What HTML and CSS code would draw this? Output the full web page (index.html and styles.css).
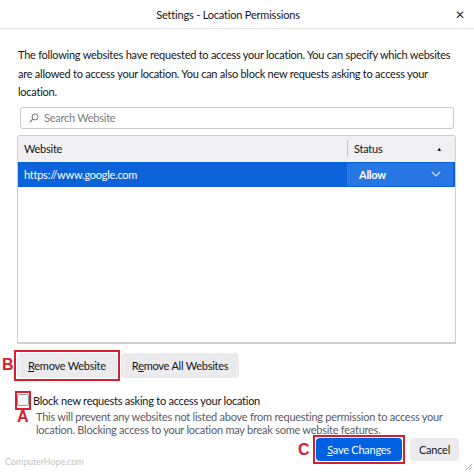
FILE: index.html
```html
<!DOCTYPE html>
<html lang="en">
<head>
    <meta charset="UTF-8" />
    <title>Settings - Location Permissions</title>
    <link rel="stylesheet" href="styles.css">
</head>
<body>
    <div class="dialog">
        <div class="dialog-header">
            <h1>Settings - Location Permissions</h1>
            <span class="close">&#x2715;</span>
        </div>

        <div class="dialog-body">
            <p class="intro">The following websites have requested to access your location. You can specify which websites are allowed to access your location. You can also block new requests asking to access your location.</p>

            <div class="search">
                <svg width="10" height="10" viewBox="0 0 10 10">
                    <circle cx="6" cy="4" r="3" fill="none" stroke="#777" stroke-width="1"/>
                    <path d="M3.8 6.2 L1 9" stroke="#777" stroke-width="1.2"/>
                </svg>
                <span>Search Website</span>
            </div>

            <div class="sites">
                <div class="sites-head">
                    <div class="col-site">Website</div>
                    <div class="col-status">Status <span class="sort">&#9650;</span></div>
                </div>
                <div class="sites-row selected">
                    <div class="col-site">https://www.google.com</div>
                    <div class="col-status status-cell">
                        <b>Allow</b>
                        <svg width="10" height="6" viewBox="0 0 10 6">
                            <path d="M1 1 L5 5 L9 1" fill="none" stroke="#cfe0ff" stroke-width="1.2"/>
                        </svg>
                    </div>
                </div>
            </div>

            <div class="actions">
                <div class="mark mark-b">
                    <span class="letter">B</span>
                    <button class="btn"><u>R</u>emove Website</button>
                </div>
                <button class="btn">R<u>e</u>move All Websites</button>
            </div>

            <div class="block-option">
                <div class="mark mark-a">
                    <span class="box"></span>
                    <span class="letter">A</span>
                </div>
                <span>Block new requests asking to access your location</span>
            </div>
            <p class="note">This will prevent any websites not listed above from requesting permission to access your location. Blocking access to your location may break some website features.</p>

            <div class="footer">
                <div class="mark mark-c">
                    <span class="letter">C</span>
                    <button class="btn primary"><u>S</u>ave Changes</button>
                </div>
                <button class="btn cancel">Cancel</button>
            </div>
        </div>

        <div class="watermark">ComputerHope.com</div>
        <svg class="grip" width="8" height="8" viewBox="0 0 8 8">
            <path d="M7 1 L1 7 M7 4 L4 7 M7 6.5 L6.5 7" stroke="#aaa" stroke-width="1"/>
        </svg>
    </div>
</body>
</html>
```

FILE: styles.css
```css
* {
    box-sizing: border-box;
    margin: 0;
    padding: 0;
}

body {
    font-family: Lato, sans-serif;
    font-size: 11px;
    letter-spacing: -0.25px;
    color: #15141a;
    background: #fff;
}

.dialog {
    position: relative;
    width: 474px;
    height: 472px;
}

.dialog-header {
    position: relative;
    height: 29px;
    border-bottom: 1px solid #e4e4e7;
    display: flex;
    align-items: center;
    justify-content: center;
    padding-right: 18px;
}

.dialog-header h1 {
    font-size: 11px;
    font-weight: 400;
    letter-spacing: -0.2px;
}

.close {
    position: absolute;
    right: 9px;
    top: 7px;
    font-size: 12px;
    color: #333;
}

.dialog-body {
    padding: 17px 18px 0 17px;
}

.intro {
    line-height: 18.5px;
    padding-left: 1px;
}

.search {
    margin: 5px 2px 0 3px;
    height: 22px;
    border: 1px solid #c9c9cc;
    border-radius: 3px;
    display: flex;
    align-items: center;
    gap: 5px;
    padding-left: 8px;
    color: #7a7a80;
}

.sites {
    margin-top: 6px;
    height: 209px;
    border: 1px solid #cfcfd3;
    border-bottom-width: 2px;
    border-radius: 3px 3px 0 0;
}

.sites-head,
.sites-row {
    display: flex;
}

.sites-head {
    height: 26px;
    background: #f0f0f4;
    align-items: center;
}

.sites-head .col-status {
    border-left: 1px solid #c4c4c8;
    height: 17px;
    display: flex;
    align-items: center;
}

.col-site {
    flex: 1;
    padding-left: 6px;
}

.col-status {
    width: 108px;
    padding-left: 6px;
    padding-right: 13px;
}

.sort {
    margin-left: auto;
    font-size: 6px;
}

.sites-row.selected {
    height: 25px;
    background: #0b62d9;
    color: #fff;
    align-items: center;
}

.status-cell {
    height: 23px;
    margin-right: 2px;
    width: 106px;
    background: #2677e4;
    display: flex;
    align-items: center;
    justify-content: space-between;
    padding-left: 12px;
    padding-right: 12px;
}

.actions {
    margin-top: 9px;
    display: flex;
    gap: 4px;
}

.btn {
    font-family: inherit;
    font-size: 11px;
    letter-spacing: -0.25px;
    color: #15141a;
    background: #ebebee;
    border: none;
    border-radius: 4px;
    height: 25px;
    padding: 0 11px;
    white-space: nowrap;
}

.btn u {
    text-decoration-thickness: 1px;
}

.mark {
    position: relative;
}

.mark-b,
.mark-c {
    outline: 2px solid #d7202d;
    outline-offset: 1px;
}

.letter {
    position: absolute;
    color: #d7202d;
    font-family: "Liberation Sans", sans-serif;
    font-weight: 700;
    font-size: 16px;
    letter-spacing: 0;
}

.mark-b .letter {
    left: -15px;
    top: 3px;
}

.mark-c .letter {
    left: -18px;
    top: 3px;
}

.block-option {
    margin-top: 13px;
    display: flex;
    align-items: center;
    gap: 2px;
}

.mark-a {
    width: 16px;
    height: 19px;
    border: 2px solid #d7202d;
    margin-left: -2px;
    display: flex;
    align-items: center;
    justify-content: center;
}

.box {
    width: 12px;
    height: 12px;
    border: 1px solid #9a9aa0;
    border-radius: 2px;
    background: #f7f7f9;
}

.mark-a .letter {
    left: 0;
    top: 15px;
}

.note {
    color: #5b5b66;
    padding-left: 19px;
    line-height: 13px;
}

.footer {
    margin-top: 2px;
    display: flex;
    justify-content: flex-end;
    gap: 8px;
    margin-right: -3px;
}

.footer .btn {
    height: 23px;
}

.btn.primary {
    background: #0061e0;
    color: #fff;
    width: 86px;
}

.btn.cancel {
    width: 49px;
    padding: 0;
}

.watermark {
    position: absolute;
    left: 5px;
    bottom: 5px;
    font-family: Lato, sans-serif;
    font-size: 9px;
    letter-spacing: -0.1px;
    color: #c4c4c4;
}

.grip {
    position: absolute;
    right: 1px;
    bottom: 1px;
}
```
